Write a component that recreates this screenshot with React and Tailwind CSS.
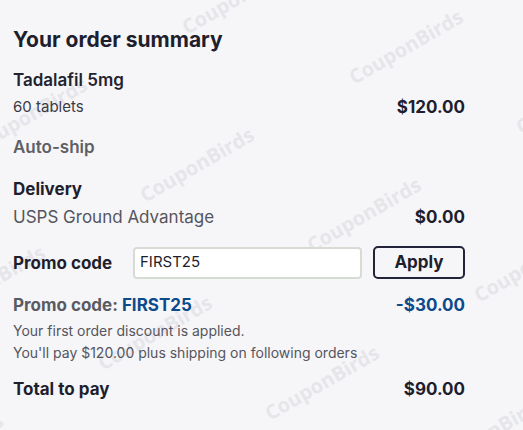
import React from 'react';

// faint watermark tiles laid on a skewed lattice
const WATERMARK_BASE = [197, 165];
const LATTICE_A = [167, 50];
const LATTICE_B = [-42, 168];
const WATERMARK_STEPS = [
  [0, 0], [1, 0], [0, 1], [1, 1], [0, -1], [1, -1], [-1, 0], [-1, 1],
  [2, 0], [2, -1], [2, 1], [-1, 2],
];

const Watermarks = () => (
  <div className="pointer-events-none absolute inset-0 overflow-hidden">
    {WATERMARK_STEPS.map(([i, j]) => {
      const x = WATERMARK_BASE[0] + i * LATTICE_A[0] + j * LATTICE_B[0];
      const y = WATERMARK_BASE[1] + i * LATTICE_A[1] + j * LATTICE_B[1];
      return (
        <span
          key={`${i}-${j}`}
          className="absolute -translate-x-1/2 -translate-y-1/2 -rotate-[30deg] whitespace-nowrap font-['Open_Sans',sans-serif] text-[20px] font-bold text-[#e6e6ea]"
          style={{ left: x, top: y }}
        >
          CouponBirds
        </span>
      );
    })}
  </div>
);

const Row = ({ children, className = '' }) => (
  <div className={`flex items-center justify-between ${className}`}>{children}</div>
);

export default function App() {
  return (
    <div className="relative h-[430px] w-[523px] overflow-hidden bg-[#f6f6f9] font-['Inter',sans-serif]">
      <Watermarks />
      <div className="relative ml-[13px] w-[452px] pt-[26px]">
        <h2 className="text-[21px] font-bold leading-7 text-[#1e1e2d]">Your order summary</h2>

        <p className="mt-[14px] text-[17px] font-semibold leading-6 text-[#23232f]">Tadalafil 5mg</p>
        <Row className="mt-[3px]">
          <span className="text-[15px] leading-6 text-[#3a3a44]">60 tablets</span>
          <span className="text-[17px] font-bold leading-6 text-[#1e1e2d]">$120.00</span>
        </Row>

        <p className="mt-4 text-[17px] font-semibold leading-6 text-[#5f5f66]">Auto-ship</p>

        <p className="mt-[18px] text-[17px] font-bold leading-6 text-[#1e1e2d]">Delivery</p>
        <Row className="mt-1">
          <span className="text-[17px] leading-6 text-[#55555d]">USPS Ground Advantage</span>
          <span className="text-[17px] font-bold leading-6 text-[#1e1e2d]">$0.00</span>
        </Row>

        <div className="mt-[17px] flex items-center">
          <span className="w-[120px] text-[17px] font-bold leading-6 text-[#1e1e2d]">Promo code</span>
          <div className="flex h-8 w-[229px] items-center rounded-[4px] border-2 border-[#d6dcd4] bg-white px-[5px] text-[15px] text-[#1e1e2d]">
            FIRST25
          </div>
          <button className="ml-[11px] flex h-[33px] w-[92px] items-center justify-center rounded-[5px] border-2 border-[#23233a] text-[17px] font-bold text-[#1e1e2d]">
            Apply
          </button>
        </div>

        <Row className="mt-[14px]">
          <span className="text-[17px] font-bold leading-6 text-[#5a5a62]">
            Promo code: <span className="text-[#0d4a8a]">FIRST25</span>
          </span>
          <span className="text-[17px] font-bold leading-6 text-[#0d4a8a]">-$30.00</span>
        </Row>
        <p className="mt-[3px] text-[14px] leading-[22px] text-[#55555d]">Your first order discount is applied.</p>
        <p className="text-[14px] leading-[22px] text-[#55555d]">You'll pay $120.00 plus shipping on following orders</p>

        <Row className="mt-[13px]">
          <span className="text-[17px] font-bold leading-6 text-[#1e1e2d]">Total to pay</span>
          <span className="text-[17px] font-bold leading-6 text-[#1e1e2d]">$90.00</span>
        </Row>
      </div>
    </div>
  );
}
